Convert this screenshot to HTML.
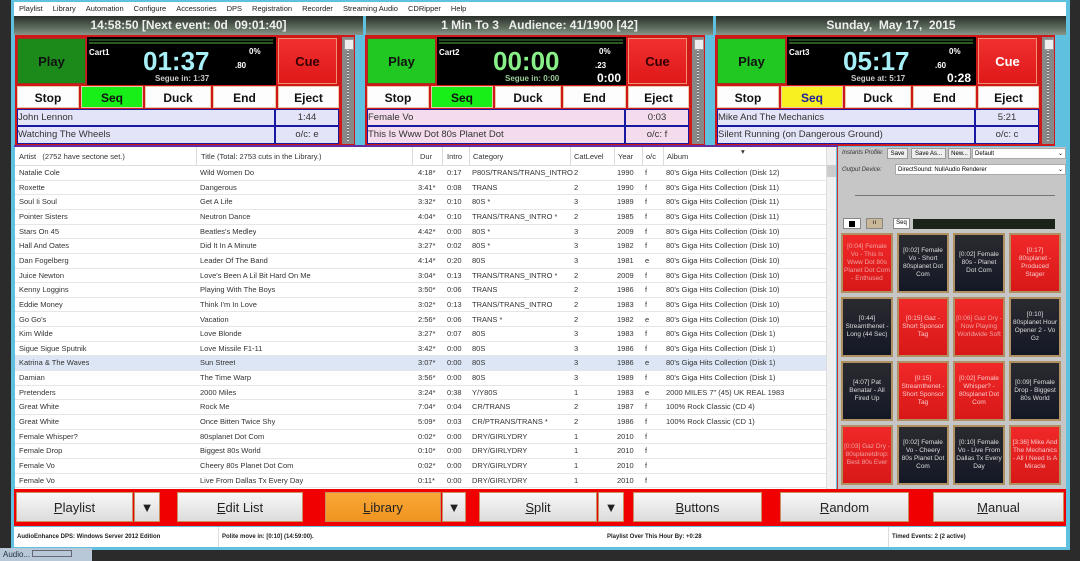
<!DOCTYPE html>
<html><head><meta charset="utf-8"><style>
*{box-sizing:border-box;margin:0;padding:0}
body{width:1080px;height:561px;overflow:hidden;background:#2b2b2b;font-family:"Liberation Sans",sans-serif;position:relative}
.a{position:absolute}
#win{left:11px;top:0;width:1059px;height:550px;background:#5fc0e0}
#menu{left:14px;top:2px;width:1052px;height:14px;background:#fff;font-size:7.5px;color:#222;line-height:14px;white-space:nowrap}
#menu span{margin:0 5px}
.hdr{top:16px;height:19px;background:linear-gradient(#2a2e2a,#5b6a5b 60%,#8a958a);color:#eee;font-size:12px;font-weight:bold;text-align:center;line-height:19px}
.cart{top:35px;width:340px;height:111px;background:#d01818}
.btn{position:absolute;font-weight:bold;text-align:center}
.play{left:2px;top:3px;width:69px;height:46px;font-size:13px;line-height:46px;color:#111;border:1px solid #a03020}
.disp{left:72px;top:2px;width:189px;height:48px;background:#000;color:#fff}
.cue{left:263px;top:3px;width:59px;height:46px;background:linear-gradient(#f03030,#e01818);font-size:13px;line-height:46px;border:1px solid #f09070}
.sm{top:51px;height:22px;background:#fdfdfd;font-size:12px;line-height:22px;color:#111;border:1px solid #e8c8a8}
.info{position:absolute;left:2px;width:322px;height:17px;font-size:9.5px;color:#333;line-height:15px;border:1px solid #1818a0}
.info span{position:absolute;right:0;top:0;width:64px;height:100%;border-left:2px solid #1818a0;text-align:center}
.slider{position:absolute;left:327px;top:2px;width:12px;height:107px;background:#888}
.slider:before{content:"";position:absolute;left:5px;top:4px;width:2px;height:100px;background:repeating-linear-gradient(#ddd 0 1px,#777 1px 3px)}
.slider:after{content:"";position:absolute;left:2px;top:2px;width:8px;height:9px;background:#eee;border:1px solid #999}
.meter{position:absolute;left:2px;top:2px;width:184px;height:6px;background:linear-gradient(#1f4a1f 0 2px,#000 2px 3px,#2c5a20 3px 5px,#000 5px)}
#tbl{left:15px;top:147px;width:811px;height:342px;background:#fff;font-size:7.5px;color:#333}
.row{position:absolute;left:0;width:811px;height:14.65px;border-bottom:1px solid #e6e6e6;line-height:14px;white-space:nowrap}
.row div{position:absolute;top:0;overflow:hidden}
#scr{left:826px;top:147px;width:10px;height:342px;background:#f0f0f0;border-left:1px solid #ddd}
#rp{left:837px;top:147px;width:229px;height:342px;background:#c6c6c6;border-left:1px solid #d03030}
.ib{position:absolute;width:52px;height:60px;border:2px solid #b09060;font-size:6.5px;text-align:center;display:flex;align-items:center;justify-content:center;line-height:8px;padding:1px}
.r{background:linear-gradient(#f02828,#d81818);color:#f0a0a0}
.k{background:linear-gradient(#2a2a30,#141826);color:#ddd}
#bar{left:14px;top:489px;width:1052px;height:37px;background:#f00000}
.bb{position:absolute;top:3px;height:30px;background:linear-gradient(#f8f8f8,#dcdcdc);border:1px solid #c89060;font-size:13px;text-align:center;line-height:30px;color:#222}
.bb u{text-decoration:underline}
#st{left:14px;top:527px;width:1052px;height:20px;background:#fff;font-size:6px;font-weight:bold;color:#222;line-height:20px}
#st div{position:absolute;top:0;height:20px;border-left:1px solid #ddd;padding-left:3px}
</style></head><body>
<div class="a" style="left:0;top:0;width:11px;height:561px;background:#2b2b2b"></div>
<div class="a" id="win"></div>
<div class="a" id="menu"><span>Playlist</span><span>Library</span><span>Automation</span><span>Configure</span><span>Accessories</span><span>DPS</span><span>Registration</span><span>Recorder</span><span>Streaming Audio</span><span>CDRipper</span><span>Help</span></div>
<div class="a hdr" style="left:14px;width:349px">14:58:50 [Next event: 0d&nbsp; 09:01:40]</div>
<div class="a hdr" style="left:366px;width:347px">1 Min To 3&nbsp;&nbsp; Audience: 41/1900 [42]</div>
<div class="a hdr" style="left:716px;width:350px">Sunday,&nbsp; May 17,&nbsp; 2015</div>

<div class="a cart" style="left:15px">
 <div class="btn play" style="background:#1b8a1b">Play</div>
 <div class="btn disp"><div class="meter"></div><div class="a" style="left:2px;top:11px;font-size:8px">Cart1</div><div class="a" style="left:56px;top:9px;font-size:26px;color:#a8f0f8">01:37</div><div class="a" style="left:162px;top:10px;font-size:8px">0%</div><div class="a" style="left:148px;top:24px;font-size:8px">.80</div><div class="a" style="left:68px;top:37px;font-size:8px;color:#ccc">Segue in: 1:37</div></div>
 <div class="btn cue" style="color:#300">Cue</div>
 <div class="btn sm" style="left:2px;width:62px">Stop</div>
 <div class="btn sm" style="left:66px;width:62px;background:#18ee18">Seq</div>
 <div class="btn sm" style="left:130px;width:66px">Duck</div>
 <div class="btn sm" style="left:198px;width:63px">End</div>
 <div class="btn sm" style="left:263px;width:61px">Eject</div>
 <div class="info" style="top:74px;background:#e4e4f8">John Lennon<span>1:44</span></div>
 <div class="info" style="top:91px;background:#e4e4f8;height:18px">Watching The Wheels<span>o/c: e</span></div>
 <div class="slider"></div>
</div>
<div class="a cart" style="left:365px">
 <div class="btn play" style="background:#22c822">Play</div>
 <div class="btn disp"><div class="meter"></div><div class="a" style="left:2px;top:11px;font-size:8px">Cart2</div><div class="a" style="left:56px;top:9px;font-size:26px;color:#88f088">00:00</div><div class="a" style="left:162px;top:10px;font-size:8px">0%</div><div class="a" style="left:158px;top:24px;font-size:8px">.23</div><div class="a" style="left:68px;top:37px;font-size:8px;color:#9c9">Segue in: 0:00</div><div class="a" style="left:160px;top:34px;font-size:12px">0:00</div></div>
 <div class="btn cue" style="color:#300">Cue</div>
 <div class="btn sm" style="left:2px;width:62px">Stop</div>
 <div class="btn sm" style="left:66px;width:62px;background:#18ee18">Seq</div>
 <div class="btn sm" style="left:130px;width:66px">Duck</div>
 <div class="btn sm" style="left:198px;width:63px">End</div>
 <div class="btn sm" style="left:263px;width:61px">Eject</div>
 <div class="info" style="top:74px;background:#f4dcec">Female Vo<span>0:03</span></div>
 <div class="info" style="top:91px;background:#f4dcec;height:18px">This Is Www Dot 80s Planet Dot<span>o/c: f</span></div>
 <div class="slider"></div>
</div>
<div class="a cart" style="left:715px">
 <div class="btn play" style="background:#22c822">Play</div>
 <div class="btn disp"><div class="meter"></div><div class="a" style="left:2px;top:11px;font-size:8px">Cart3</div><div class="a" style="left:56px;top:9px;font-size:26px;color:#a8f0f8">05:17</div><div class="a" style="left:162px;top:10px;font-size:8px">0%</div><div class="a" style="left:148px;top:24px;font-size:8px">.60</div><div class="a" style="left:64px;top:37px;font-size:8px;color:#ccc">Segue at: 5:17</div><div class="a" style="left:160px;top:34px;font-size:12px">0:28</div></div>
 <div class="btn cue" style="color:#fff">Cue</div>
 <div class="btn sm" style="left:2px;width:62px">Stop</div>
 <div class="btn sm" style="left:66px;width:62px;background:#f8f020;color:#2020a0">Seq</div>
 <div class="btn sm" style="left:130px;width:66px">Duck</div>
 <div class="btn sm" style="left:198px;width:63px">End</div>
 <div class="btn sm" style="left:263px;width:61px">Eject</div>
 <div class="info" style="top:74px;background:#e4e4f8">Mike And The Mechanics<span>5:21</span></div>
 <div class="info" style="top:91px;background:#e4e4f8;height:18px">Silent Running (on Dangerous Ground)<span>o/c: c</span></div>
 <div class="slider"></div>
</div>
<div class="a" style="left:14px;top:145px;width:824px;height:2px;background:#6030a0"></div>

<div class="a" id="tbl">
<div class="row" style="top:0;height:19px;line-height:19px;border-bottom:1px solid #ddd"><div style="left:4px">Artist&nbsp;&nbsp; (2752 have sectone set.)</div><div style="left:181px;border-left:1px solid #ddd;padding-left:4px;height:19px">Title (Total: 2753 cuts in the Library.)</div><div style="left:397px;border-left:1px solid #ddd;padding-left:7px;height:19px">Dur</div><div style="left:427px;border-left:1px solid #ddd;padding-left:4px;height:19px">Intro</div><div style="left:454px;border-left:1px solid #ddd;padding-left:3px;height:19px">Category</div><div style="left:555px;border-left:1px solid #ddd;padding-left:3px;height:19px">CatLevel</div><div style="left:599px;border-left:1px solid #ddd;padding-left:3px;height:19px">Year</div><div style="left:627px;border-left:1px solid #ddd;padding-left:3px;height:19px">o/c</div><div style="left:648px;border-left:1px solid #ddd;padding-left:3px;height:19px">Album</div><div style="left:726px;top:-5px">▾</div></div>
<div id="rows"></div>
</div>
<div class="a" id="scr"><div class="a" style="left:0;top:18px;width:9px;height:12px;background:#ccc"></div></div>

<div class="a" id="rp">
 <div class="a" style="left:4px;top:3px;font-size:6px;font-style:italic;color:#333">Instants Profile:</div>
 <div class="a" style="left:49px;top:1px;width:21px;height:11px;background:#eee;border:1px solid #999;font-size:6px;text-align:center;line-height:10px">Save</div>
 <div class="a" style="left:73px;top:1px;width:35px;height:11px;background:#eee;border:1px solid #999;font-size:6px;text-align:center;line-height:10px">Save As...</div>
 <div class="a" style="left:110px;top:1px;width:23px;height:11px;background:#eee;border:1px solid #999;font-size:6px;text-align:center;line-height:10px">New...</div>
 <div class="a" style="left:134px;top:1px;width:94px;height:11px;background:#fff;border:1px solid #aaa;font-size:6px;line-height:10px;padding-left:2px">Default<span style="float:right;padding-right:2px">⌄</span></div>
 <div class="a" style="left:4px;top:20px;font-size:6px;font-style:italic;color:#333">Output Device:</div>
 <div class="a" style="left:57px;top:17px;width:171px;height:11px;background:#fff;border:1px solid #aaa;font-size:6px;line-height:10px;padding-left:2px">DirectSound: NullAudio Renderer<span style="float:right;padding-right:2px">⌄</span></div>
 <div class="a" style="left:17px;top:48px;width:200px;height:1px;background:#777"></div>
 <div class="a" style="left:5px;top:71px;width:18px;height:11px;background:#fff;border:1px solid #888"><div class="a" style="left:5px;top:2px;width:6px;height:6px;background:#000"></div></div>
 <div class="a" style="left:28px;top:71px;width:17px;height:11px;background:#c8b898;border:1px solid #888;font-size:6px;text-align:center;line-height:9px">ıı</div>
 <div class="a" style="left:55px;top:71px;width:17px;height:11px;background:#fff;border:1px solid #888;font-size:6px;text-align:center;line-height:9px">Seq</div>
 <div class="a" style="left:75px;top:72px;width:142px;height:10px;background:#1a2418"></div>
 <div id="grid"></div>
</div>

<div class="a" id="bar">
 <div class="bb" style="left:2px;width:117px"><u>P</u>laylist</div>
 <div class="bb" style="left:120px;width:26px">▼</div>
 <div class="bb" style="left:163px;width:126px"><u>E</u>dit List</div>
 <div class="bb" style="left:311px;width:116px;background:linear-gradient(#f8a838,#f09420)"><u>L</u>ibrary</div>
 <div class="bb" style="left:428px;width:24px">▼</div>
 <div class="bb" style="left:465px;width:118px"><u>S</u>plit</div>
 <div class="bb" style="left:584px;width:26px">▼</div>
 <div class="bb" style="left:619px;width:129px"><u>B</u>uttons</div>
 <div class="bb" style="left:766px;width:129px"><u>R</u>andom</div>
 <div class="bb" style="left:919px;width:131px"><u>M</u>anual</div>
</div>
<div class="a" id="st"><div style="left:0;border:0">AudioEnhance DPS: Windows Server 2012 Edition</div><div style="left:204px">Polite move in: [0:10] (14:59:00).</div><div style="left:590px;border:0">Playlist Over This Hour By: +0:28</div><div style="left:874px">Timed Events: 2 (2 active)</div></div>
<div class="a" style="left:0;top:548px;width:92px;height:13px;background:#b8c8d8;font-size:8px;line-height:13px;padding-left:3px;color:#234">Audio... <span style="display:inline-block;width:40px;height:7px;border:1px solid #667"></span></div>

<script>
var d=[["Natalie Cole","Wild Women Do","4:18*","0:17","P80S/TRANS/TRANS_INTRO","2","1990","f","80's Giga Hits Collection (Disk 12)"],
["Roxette","Dangerous","3:41*","0:08","TRANS","2","1990","f","80's Giga Hits Collection (Disk 11)"],
["Soul Ii Soul","Get A Life","3:32*","0:10","80S *","3","1989","f","80's Giga Hits Collection (Disk 11)"],
["Pointer Sisters","Neutron Dance","4:04*","0:10","TRANS/TRANS_INTRO *","2","1985","f","80's Giga Hits Collection (Disk 11)"],
["Stars On 45","Beatles's Medley","4:42*","0:00","80S *","3","2009","f","80's Giga Hits Collection (Disk 10)"],
["Hall And Oates","Did It In A Minute","3:27*","0:02","80S *","3","1982","f","80's Giga Hits Collection (Disk 10)"],
["Dan Fogelberg","Leader Of The Band","4:14*","0:20","80S","3","1981","e","80's Giga Hits Collection (Disk 10)"],
["Juice Newton","Love's Been A Lil Bit Hard On Me","3:04*","0:13","TRANS/TRANS_INTRO *","2","2009","f","80's Giga Hits Collection (Disk 10)"],
["Kenny Loggins","Playing With The Boys","3:50*","0:06","TRANS","2","1986","f","80's Giga Hits Collection (Disk 10)"],
["Eddie Money","Think I'm In Love","3:02*","0:13","TRANS/TRANS_INTRO","2","1983","f","80's Giga Hits Collection (Disk 10)"],
["Go Go's","Vacation","2:56*","0:06","TRANS *","2","1982","e","80's Giga Hits Collection (Disk 10)"],
["Kim Wilde","Love Blonde","3:27*","0:07","80S","3","1983","f","80's Giga Hits Collection (Disk 1)"],
["Sigue Sigue Sputnik","Love Missile F1-11","3:42*","0:00","80S","3","1986","f","80's Giga Hits Collection (Disk 1)"],
["Katrina & The Waves","Sun Street","3:07*","0:00","80S","3","1986","e","80's Giga Hits Collection (Disk 1)"],
["Damian","The Time Warp","3:56*","0:00","80S","3","1989","f","80's Giga Hits Collection (Disk 1)"],
["Pretenders","2000 Miles","3:24*","0:38","Y/Y80S","1","1983","e","2000 MILES 7\" (45) UK REAL 1983"],
["Great White","Rock Me","7:04*","0:04","CR/TRANS","2","1987","f","100% Rock Classic (CD 4)"],
["Great White","Once Bitten Twice Shy","5:09*","0:03","CR/PTRANS/TRANS *","2","1986","f","100% Rock Classic (CD 1)"],
["Female Whisper?","80splanet Dot Com","0:02*","0:00","DRY/GIRLYDRY","1","2010","f",""],
["Female Drop","Biggest 80s World","0:10*","0:00","DRY/GIRLYDRY","1","2010","f",""],
["Female Vo","Cheery 80s Planet Dot Com","0:02*","0:00","DRY/GIRLYDRY","1","2010","f",""],
["Female Vo","Live From Dallas Tx Every Day","0:11*","0:00","DRY/GIRLYDRY","1","2010","f",""]];
var L=[4,185,403,432,457,559,602,630,651],h="";
d.forEach(function(r,i){h+='<div class="row" style="top:'+(19+i*14.65)+'px;'+(i==13?'background:#dce6f4':'')+'">';
r.forEach(function(c,j){h+='<div style="left:'+L[j]+'px">'+c+'</div>'});h+='</div>'});
document.getElementById('rows').innerHTML=h;
var g=[["r","[0:04] Female Vo - This Is Www Dot 80s Planet Dot Com - Enthused"],["k","[0:02] Female Vo - Short 80splanet Dot Com"],["k","[0:02] Female 80s - Planet Dot Com"],["r","[0:17] 80splanet - Produced Stager"],
["k","[0:44] Streamthenet - Long (44 Sec)"],["r","[0:15] Gaz - Short Sponsor Tag"],["r","[0:06] Gaz Dry - Now Playing Worldwide Soft"],["k","[0:10] 80splanet Hour Opener 2 - Vo Gz"],
["k","[4:07] Pat Benatar - All Fired Up"],["r","[0:15] Streamthenet - Short Sponsor Tag"],["r","[0:02] Female Whisper? - 80splanet Dot Com"],["k","[0:09] Female Drop - Biggest 80s World"],
["r","[0:03] Gaz Dry - 80splanetdrop: Best 80s Ever"],["k","[0:02] Female Vo - Cheery 80s Planet Dot Com"],["k","[0:10] Female Vo - Live From Dallas Tx Every Day"],["r","[3:36] Mike And The Mechanics - All I Need Is A Miracle"]];
h="";g.forEach(function(b,i){var c=i%4,r=Math.floor(i/4);h+='<div class="ib '+b[0]+'" style="left:'+(3+c*56)+'px;top:'+(86+r*64)+'px'+((i==3||i==15||i==5||i==9||i==10)?';color:#f8c8c8':'')+'">'+b[1]+'</div>'});
document.getElementById('grid').innerHTML=h;
</script>
</body></html>
